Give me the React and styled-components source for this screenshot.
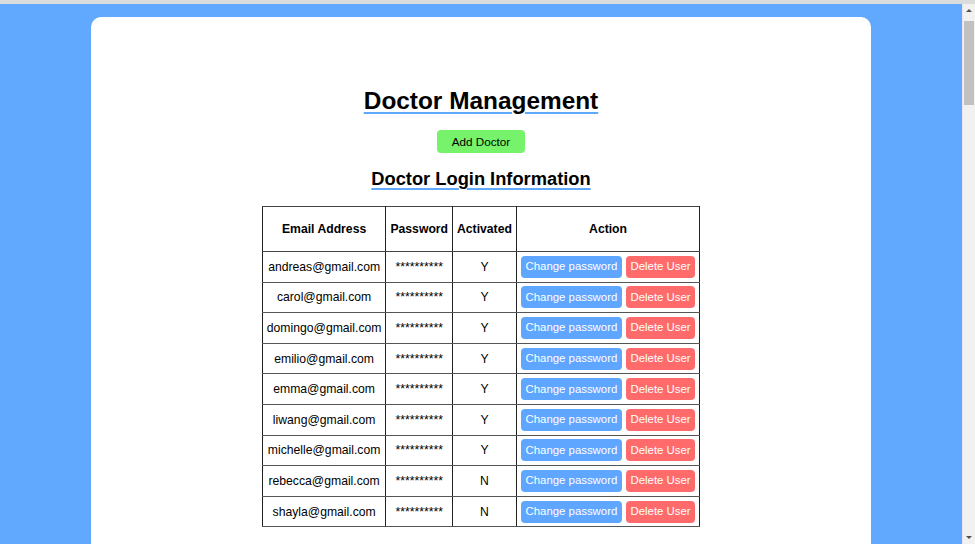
import React from "react";
import styled, { createGlobalStyle } from "styled-components";

const GlobalStyle = createGlobalStyle`
  html {
    border-top: 4px solid #dcdcdc;
  }
  body {
    margin: 0;
    padding-right: 13px;
    background: #61a8ff;
    font-family: "Liberation Sans", Arial, sans-serif;
    color: #000;
  }
`;

// fake browser scrollbar, sits over the right edge
const ScrollTrack = styled.div`
  position: fixed;
  top: 4px;
  right: 0;
  bottom: 0;
  width: 13px;
  background: #f1f1f1;
  border-left: 1px solid #e6e6e6;
  box-sizing: border-box;
  display: flex;
  flex-direction: column;
  align-items: center;
  z-index: 10;
`;

const Arrow = styled.span`
  width: 0;
  height: 0;
  margin: ${({ down }) => (down ? "auto 0 5px" : "5px 0 0")};
  border-left: 3px solid transparent;
  border-right: 3px solid transparent;
  ${({ down }) =>
    down ? "border-top: 3px solid #505050;" : "border-bottom: 3px solid #505050;"}
`;

const Thumb = styled.div`
  margin-top: 9px;
  width: 10px;
  height: 84px;
  background: #c1c1c1;
`;

const Card = styled.main`
  max-width: 780px;
  margin: 13px auto 0;
  background: #fff;
  border-radius: 10px;
  padding: 70px 0 40px;
  display: flex;
  flex-direction: column;
  align-items: center;
`;

const Title = styled.h1`
  margin: 0;
  font-size: 24.4px;
  line-height: 27px;
  font-weight: 700;
  text-decoration: underline;
  text-decoration-color: #61a8ff;
  text-decoration-thickness: 2px;
  text-underline-offset: 3px;
`;

const AddButton = styled.button`
  margin-top: 16px;
  font-family: inherit;
  font-size: 11.7px;
  line-height: 13px;
  padding: 5px 15px;
  border: none;
  border-radius: 4px;
  background: #76f26b;
  color: #000;
  cursor: pointer;
`;

const Subtitle = styled.h2`
  margin: 15px 0 0;
  font-size: 18.3px;
  line-height: 21px;
  font-weight: 700;
  text-decoration: underline;
  text-decoration-color: #61a8ff;
  text-decoration-thickness: 2px;
  text-underline-offset: 3px;
`;

const Table = styled.table`
  margin-top: 17px;
  border-collapse: collapse;
  border: 1px solid #222;
  font-size: 12.2px;
`;

const Th = styled.th`
  border: 1px solid #444;
  border-left-color: #222;
  border-right-color: #222;
  padding: 15px 4px;
  font-weight: 700;
  text-align: center;
`;

const Td = styled.td`
  border: 1px solid #555;
  border-left-color: #222;
  border-right-color: #222;
  padding: 3.8px 4px;
  text-align: center;
  white-space: nowrap;
`;

const ActionCell = styled(Td)`
  text-align: left;
`;

const ActionButton = styled.button`
  font-family: inherit;
  font-size: 11.4px;
  line-height: 13px;
  padding: 4.5px 4.6px;
  border: none;
  border-radius: 4px;
  color: #fff;
  background: ${({ danger }) => (danger ? "#ff6b6b" : "#5ea6ff")};
  margin-right: ${({ danger }) => (danger ? "0" : "4px")};
  cursor: pointer;
`;

const doctors = [
  { email: "andreas@gmail.com", active: "Y" },
  { email: "carol@gmail.com", active: "Y" },
  { email: "domingo@gmail.com", active: "Y" },
  { email: "emilio@gmail.com", active: "Y" },
  { email: "emma@gmail.com", active: "Y" },
  { email: "liwang@gmail.com", active: "Y" },
  { email: "michelle@gmail.com", active: "Y" },
  { email: "rebecca@gmail.com", active: "N" },
  { email: "shayla@gmail.com", active: "N" },
];

export default function App() {
  return (
    <>
      <GlobalStyle />
      <ScrollTrack>
        <Arrow />
        <Thumb />
        <Arrow down />
      </ScrollTrack>
      <Card>
        <Title>Doctor Management</Title>
        <AddButton>Add Doctor</AddButton>
        <Subtitle>Doctor Login Information</Subtitle>
        <Table>
          <thead>
            <tr>
              <Th>Email Address</Th>
              <Th>Password</Th>
              <Th>Activated</Th>
              <Th>Action</Th>
            </tr>
          </thead>
          <tbody>
            {doctors.map((d) => (
              <tr key={d.email}>
                <Td>{d.email}</Td>
                <Td>**********</Td>
                <Td>{d.active}</Td>
                <ActionCell>
                  <ActionButton>Change password</ActionButton>
                  <ActionButton danger>Delete User</ActionButton>
                </ActionCell>
              </tr>
            ))}
          </tbody>
        </Table>
      </Card>
    </>
  );
}
